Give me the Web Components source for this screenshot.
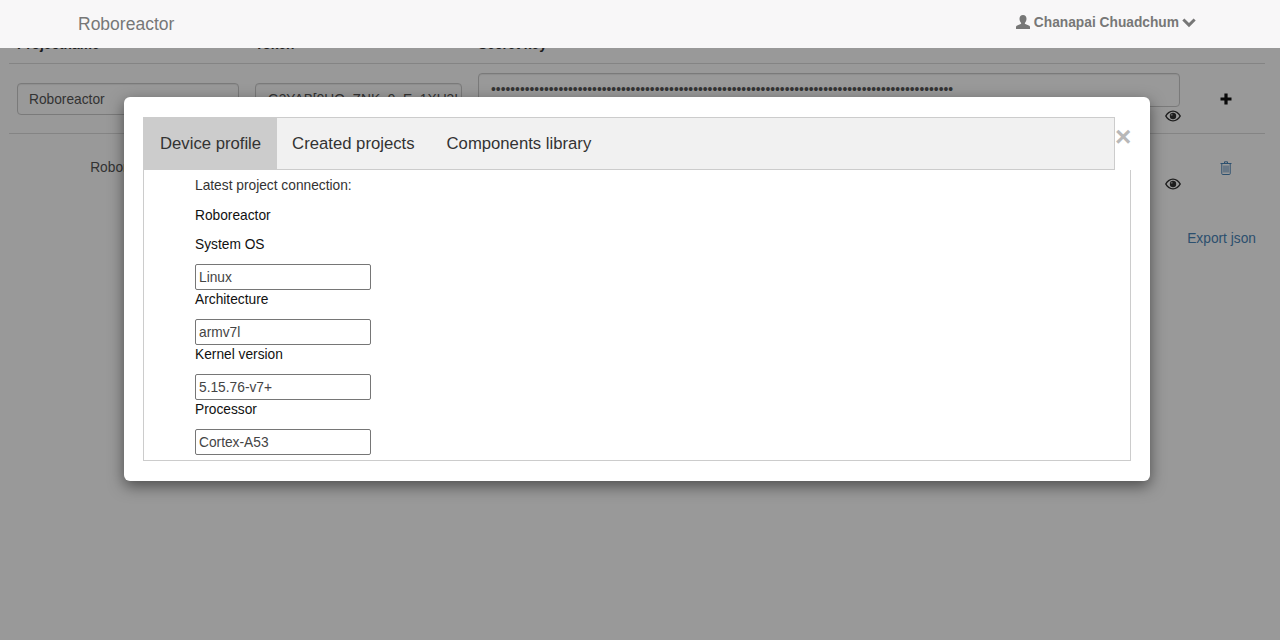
<!DOCTYPE html>
<html>
<head>
<meta charset="utf-8">
<title>Roboreactor</title>
<style>
  html, body { margin: 0; height: 100%; }
  body { font: 13.75px/20px "Liberation Sans", Arial, sans-serif; color: #333; background: #fff; overflow: hidden; }
</style>
</head>
<body>
<rr-app></rr-app>

<script>
const ICONS = {
  user: '<svg viewBox="0 0 14 14" width="14" height="14"><path fill="currentColor" d="M7 0c2.200 0 3.500 1.600 3.500 3.800 0 1.600-.7 3.200-1.500 4-.3.4-.2 1 .3 1.200l3.500 1.600c.7.300 1.200.8 1.200 1.500V14H0v-1.900c0-.7.500-1.200 1.200-1.500L4.700 9c.5-.2.6-.8.3-1.200C4.200 7 3.500 5.400 3.500 3.800 3.500 1.600 4.800 0 7 0z"/></svg>',
  chevron: '<svg viewBox="0 0 14 14" width="14" height="14"><path fill="currentColor" d="M7 12.200L0.300 5.500 2.400 3.400 7 8 11.600 3.400 13.700 5.500z"/></svg>',
  eye: '<svg viewBox="0 0 16 12" width="16" height="12"><path fill="currentColor" fill-rule="evenodd" d="M8 .5c3.500 0 6.300 2.400 8 5.500-1.700 3.100-4.500 5.500-8 5.500S1.700 9.100 0 6C1.700 2.900 4.500.5 8 .5zM8 1.800C5.400 1.800 3.200 3.500 1.600 6 3.200 8.500 5.400 10.200 8 10.200S12.800 8.500 14.400 6C12.800 3.500 10.600 1.800 8 1.800z"/><circle cx="8" cy="6" r="3.200" fill="currentColor"/><circle cx="6.700" cy="4.700" r="1" fill="#999"/></svg>',
  plus: '<svg viewBox="0 0 12 12" width="12" height="12"><path fill="currentColor" d="M4.400 .5h3.200v3.900h3.900v3.200H7.600v3.900H4.400V7.600H.5V4.400h3.900z"/></svg>',
  trash: '<svg viewBox="0 0 12 14" width="12" height="14"><g fill="none" stroke="currentColor" stroke-width="1"><path d="M.5 2.500h11M4.500 2.500V.8h3v1.700"/><path d="M1.800 2.500v10.200c0 .5.300.8.800.8h6.800c.5 0 .8-.3.800-.8V2.500"/><path d="M4 4.500v7M6 4.500v7M8 4.500v7" stroke-width=".9"/></g></svg>'
};

class RrIcon extends HTMLElement {
  connectedCallback() {
    const root = this.attachShadow({mode: 'open'});
    root.innerHTML = `<style>:host { display: inline-flex; line-height: 0; }</style>${ICONS[this.getAttribute('name')]}`;
  }
}
customElements.define('rr-icon', RrIcon);

class RrNavbar extends HTMLElement {
  constructor() {
    super();
    this.attachShadow({mode: 'open'}).innerHTML = `
      <style>
        :host { position: absolute; top: 0; left: 0; right: 0; z-index: 20; height: 48px; background: #f8f7f8; color: #777;
                display: flex; align-items: center; justify-content: space-between; padding: 0 84px 0 78px; }
        .brand { font-size: 17.5px; line-height: 20px; }
        .user { display: flex; align-items: center; gap: 3px; font-weight: bold; margin-top: -3px; }
        .user rr-icon { margin-top: -2px; }
        .user rr-icon:first-child { margin-right: 1px; }
      </style>
      <span class="brand"><slot name="brand"></slot></span>
      <span class="user"><rr-icon name="user"></rr-icon><slot name="user"></slot><rr-icon name="chevron"></rr-icon></span>`;
  }
}
customElements.define('rr-navbar', RrNavbar);

class RrProjectRow extends HTMLElement {
  constructor() {
    super();
    this.attachShadow({mode: 'open'}).innerHTML = `
      <style>
        :host { display: grid; grid-template-columns: 238px 223px 718px 77px; align-items: center; border-top: 1px solid #ddd; padding: 1px 0; }
        .cell { padding: 8px; min-width: 0; box-sizing: border-box; }
        .name { text-align: center; color: #555; }
        .secret { display: flex; flex-direction: column; align-items: flex-end; }
        .secret > div:first-child { align-self: stretch; }
        .eye { margin: 1px -1px 0 0; color: #333; display: flex; height: 16px; align-items: center; }
        .blank { height: 32px; }
        .act { display: flex; justify-content: center; padding-right: 9px; }
      </style>
      <div class="cell name"><slot name="name"></slot></div>
      <div class="cell"><slot name="token"></slot></div>
      <div class="cell secret"><div><slot name="secret"><div class="blank"></div></slot></div><div class="eye"><rr-icon name="eye"></rr-icon></div></div>
      <div class="cell act"><slot name="action"></slot></div>`;
  }
}
customElements.define('rr-project-row', RrProjectRow);

class RrField extends HTMLElement {
  constructor() {
    super();
    this.attachShadow({mode: 'open'}).innerHTML = `
      <style>
        :host { display: block; box-sizing: border-box; height: 34px; padding: 6px 12px; border: 1px solid #ccc; border-radius: 4px;
                background: #fff; color: #555; overflow: hidden; white-space: nowrap; box-shadow: inset 0 1px 1px rgba(0,0,0,.075); }
        :host([short]) { height: 32px; padding: 6px 12px 4px; }
        :host([tight]) { padding-left: 11px; }
      </style>
      <slot></slot>`;
  }
}
customElements.define('rr-field', RrField);

class RrProjects extends HTMLElement {
  constructor() {
    super();
    this.attachShadow({mode: 'open'}).innerHTML = `
      <style>
        :host { display: block; padding: 35px 15px 0 9px; }
        .head { display: grid; grid-template-columns: 238px 223px 718px 77px; font-weight: bold; padding-bottom: 8px; }
        .head span { padding: 0 8px; }
        .export { text-align: right; padding: 28px 9px 0 0; color: #4a85b8; }
      </style>
      <div class="head"><span>Projectname</span><span>Token</span><span>Secret key</span></div>
      <slot></slot>
      <div class="export"><slot name="export"></slot></div>`;
  }
}
customElements.define('rr-projects', RrProjects);

class RrModal extends HTMLElement {
  constructor() {
    super();
    this.attachShadow({mode: 'open'}).innerHTML = `
      <style>
        :host { position: absolute; inset: 48px 0 0 0; z-index: 10; background: rgba(0,0,0,.4); }
        .box { position: absolute; left: 124px; top: 49px; width: 1026px; height: 384px; box-sizing: border-box; padding: 20px 19px;
               background: #fff; border-radius: 6px; box-shadow: 0 5px 15px rgba(0,0,0,.5); }
        .top { display: flex; align-items: flex-start; }
        .close { color: #b8b8b8; font-size: 28px; font-weight: bold; line-height: 40px; width: 16px; text-align: center; }
      </style>
      <div class="box">
        <div class="top"><slot name="tabs"></slot><span class="close">×</span></div>
        <slot></slot>
      </div>`;
  }
}
customElements.define('rr-modal', RrModal);

class RrTabs extends HTMLElement {
  constructor() {
    super();
    this.attachShadow({mode: 'open'}).innerHTML = `
      <style>
        :host { display: flex; box-sizing: border-box; width: 972px; height: 53px; background: #f1f1f1; border: 1px solid #ccc; }
      </style>
      <slot></slot>`;
  }
}
customElements.define('rr-tabs', RrTabs);

class RrTab extends HTMLElement {
  constructor() {
    super();
    this.attachShadow({mode: 'open'}).innerHTML = `
      <style>
        :host { display: block; padding: 14px 17px 14px 15px; font-size: 16.7px; line-height: 23px; color: #333; }
        :host([active]) { background: #ccc; padding: 14px 16px; }
      </style>
      <slot></slot>`;
  }
}
customElements.define('rr-tab', RrTab);

class RrPanel extends HTMLElement {
  constructor() {
    super();
    this.attachShadow({mode: 'open'}).innerHTML = `
      <style>
        :host { display: block; box-sizing: border-box; width: 988px; height: 291px; padding: 6px 12px 0 51px; border: 1px solid #ccc; border-top: 0; color: #000; line-height: 19px; }
      </style>
      <slot></slot>`;
  }
}
customElements.define('rr-panel', RrPanel);

class RrInfo extends HTMLElement {
  constructor() {
    super();
    this.attachShadow({mode: 'open'}).innerHTML = `
      <style>
        :host { display: block; margin-bottom: 10px; color: #111; }
        :host([lead]) { margin-bottom: 11px; color: #333; }
      </style>
      <slot></slot>`;
  }
}
customElements.define('rr-info', RrInfo);

class RrReadout extends HTMLElement {
  constructor() {
    super();
    this.attachShadow({mode: 'open'}).innerHTML = `
      <style>
        :host { display: block; box-sizing: border-box; width: 176px; height: 26px; padding: 3px 3px 1px; line-height: 20px; border: 1px solid #767676; border-radius: 2px; color: #444; white-space: nowrap; overflow: hidden; }
      </style>
      <slot></slot>`;
  }
}
customElements.define('rr-readout', RrReadout);

class RrApp extends HTMLElement {
  constructor() {
    super();
    this.attachShadow({mode: 'open'}).innerHTML = `
      <style>
        :host { display: block; position: relative; height: 640px; overflow: hidden; }
        .plus { color: #111; }
        .trash { color: #4a85b8; }
      </style>
      <rr-navbar>
        <span slot="brand">Roboreactor</span>
        <span slot="user">Chanapai Chuadchum</span>
      </rr-navbar>
      <rr-projects>
        <rr-project-row>
          <rr-field slot="name" short tight style="text-align:left">Roboreactor</rr-field>
          <rr-field slot="token" short>G3YAB[9HO_ZNK_9_E_1XU3!</rr-field>
          <rr-field slot="secret">${'•'.repeat(96)}</rr-field>
          <rr-icon slot="action" class="plus" name="plus"></rr-icon>
        </rr-project-row>
        <rr-project-row>
          <span slot="name">Roboreactor</span>
          <rr-icon slot="action" class="trash" name="trash"></rr-icon>
        </rr-project-row>
        <span slot="export">Export json</span>
      </rr-projects>
      <rr-modal>
        <rr-tabs slot="tabs">
          <rr-tab active>Device profile</rr-tab>
          <rr-tab>Created projects</rr-tab>
          <rr-tab>Components library</rr-tab>
        </rr-tabs>
        <rr-panel>
          <rr-info lead>Latest project connection:</rr-info>
          <rr-info>Roboreactor</rr-info>
          <rr-info>System OS</rr-info>
          <rr-readout>Linux</rr-readout>
          <rr-info>Architecture</rr-info>
          <rr-readout>armv7l</rr-readout>
          <rr-info>Kernel version</rr-info>
          <rr-readout>5.15.76-v7+</rr-readout>
          <rr-info>Processor</rr-info>
          <rr-readout>Cortex-A53</rr-readout>
        </rr-panel>
      </rr-modal>`;
  }
}
customElements.define('rr-app', RrApp);
</script>
</body>
</html>
